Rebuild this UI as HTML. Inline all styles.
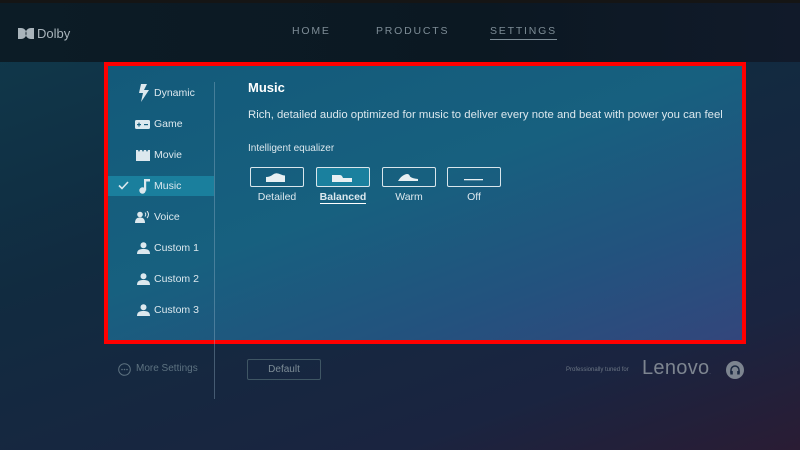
<!DOCTYPE html>
<html><head><meta charset="utf-8"><style>
*{margin:0;padding:0;box-sizing:border-box}
body{width:800px;height:450px;overflow:hidden;font-family:"Liberation Sans",sans-serif;position:relative;
background:linear-gradient(160deg,#0f3a4c 0%,#112b40 40%,#1a2440 80%,#2a1c34 100%);}
.top{position:absolute;left:0;top:0;width:800px;height:62px;background:linear-gradient(90deg,#0c1c26,#0b1822 60%,#111a2a);border-top:3px solid #151515}
.nav{position:absolute;top:25px;font-size:10.5px;letter-spacing:1.8px;color:#7d8c96}
.logo{position:absolute;left:18px;top:26px;color:#a9b4bb;font-size:13px;display:flex;align-items:center;gap:3px}
.panel{position:absolute;left:104px;top:62px;width:642px;height:282px;border:4px solid #ff0000;
background:linear-gradient(160deg,#135a7a 0%,#17607f 45%,#23527e 75%,#33467c 100%)}
.div{position:absolute;left:214px;top:82px;width:1px;height:317px;background:rgba(160,190,210,.35)}
.item{position:absolute;left:154px;font-size:10.5px;color:#dce8ee}
.sel{position:absolute;left:108px;top:176px;width:106px;height:20px;background:#1a7f9d}
.ic{position:absolute;fill:#dce8ee}
.eq{position:absolute;top:167px;width:54px;height:20px;border:1.5px solid #d9e6ec;border-radius:2px}
.eq svg{position:absolute;left:0;top:0}
.lbl{position:absolute;top:191px;font-size:10.5px;color:#dce8ee;width:54px;text-align:center}
</style></head><body>
<div class="top"></div>
<div class="logo"><svg width="16" height="11" viewBox="0 0 16 11"><path d="M0 0h3a5.5 5.5 0 0 1 0 11H0z M16 0h-3a5.5 5.5 0 0 0 0 11h3z" fill="#a9b4bb"/></svg><span>Dolby</span></div>
<div class="nav" style="left:292px">HOME</div>
<div class="nav" style="left:376px">PRODUCTS</div>
<div class="nav" style="left:490px;border-bottom:1px solid #7d8c96;padding-bottom:2px">SETTINGS</div>
<div class="panel"></div>
<div class="div"></div>
<div class="sel"></div>
<svg class="ic" style="left:138px;top:84px" width="12" height="18" viewBox="0 0 12 18"><path d="M3 0h6L6 6h5L3 18l2-9H1z"/></svg>
<div class="item" style="top:87px">Dynamic</div>
<svg class="ic" style="left:135px;top:120px" width="15" height="9" viewBox="0 0 15 9"><rect width="15" height="9" rx="1.5"/><rect x="2" y="4" width="4" height="1.2" fill="#16607f"/><rect x="3.4" y="2.6" width="1.2" height="4" fill="#16607f"/><rect x="9" y="4" width="4" height="1.2" fill="#16607f"/></svg>
<div class="item" style="top:118px">Game</div>
<svg class="ic" style="left:136px;top:150px" width="14" height="11" viewBox="0 0 14 11"><path d="M0 0h2l1 2 1-2h2l1 2 1-2h2l1 2 1-2h2v11H0z"/></svg>
<div class="item" style="top:149px">Movie</div>
<svg style="position:absolute;left:118px;top:181px" width="11" height="9" viewBox="0 0 11 9"><path d="M1 4.5l3 3 6-6.5" stroke="#dce8ee" stroke-width="1.6" fill="none"/></svg>
<svg class="ic" style="left:139px;top:178px" width="11" height="16" viewBox="0 0 11 16"><circle cx="3.5" cy="12.5" r="3.2"/><path d="M5 1h6v2.5H7.2V12.5H5z"/></svg>
<div class="item" style="top:180px">Music</div>
<svg class="ic" style="left:135px;top:211px" width="15" height="12" viewBox="0 0 15 12"><circle cx="5" cy="3.5" r="2.8"/><path d="M0 12c0-4 2-5.5 5-5.5s5 1.5 5 5.5z"/><path d="M10 1.5q1.5 2 0 4M12 0q3 3.5 0 7" stroke="#dce8ee" fill="none" stroke-width="1"/></svg>
<div class="item" style="top:211px">Voice</div>
<svg class="ic" style="left:137px;top:242px" width="13" height="12" viewBox="0 0 13 12"><circle cx="6.5" cy="3.2" r="3"/><path d="M0 12c0-4 2.5-5 6.5-5s6.5 1 6.5 5z"/></svg>
<div class="item" style="top:242px">Custom 1</div>
<svg class="ic" style="left:137px;top:273px" width="13" height="12" viewBox="0 0 13 12"><circle cx="6.5" cy="3.2" r="3"/><path d="M0 12c0-4 2.5-5 6.5-5s6.5 1 6.5 5z"/></svg>
<div class="item" style="top:273px">Custom 2</div>
<svg class="ic" style="left:137px;top:304px" width="13" height="12" viewBox="0 0 13 12"><circle cx="6.5" cy="3.2" r="3"/><path d="M0 12c0-4 2.5-5 6.5-5s6.5 1 6.5 5z"/></svg>
<div class="item" style="top:304px">Custom 3</div>

<div style="position:absolute;left:248px;top:80px;font-size:13px;font-weight:bold;color:#fff">Music</div>
<div style="position:absolute;left:248px;top:109px;font-size:11.35px;color:#dce8ee;white-space:nowrap">Rich, detailed audio optimized for music to deliver every note and beat with power you can feel</div>
<div style="position:absolute;left:248px;top:143px;font-size:10px;color:#dce8ee">Intelligent equalizer</div>

<div class="eq" style="left:250px"><svg width="51" height="17"><path d="M15 14V9q4 0 7-2.5t8 0q2 1 4 1V14z" fill="#e8f0f3"/></svg></div>
<div class="eq" style="left:316px;background:#1a809e"><svg width="51" height="17"><path d="M15 14V7h8q2 0 3 3h9v4z" fill="#e8f0f3"/></svg></div>
<div class="eq" style="left:382px"><svg width="51" height="17"><path d="M15 13q3-5 7-6.5t5 2q2 2 8 2.5v2z" fill="#e8f0f3"/></svg></div>
<div class="eq" style="left:447px"><svg width="51" height="17"><rect x="16" y="11" width="19" height="1.3" fill="#e8f0f3"/></svg></div>
<div class="lbl" style="left:250px">Detailed</div>
<div class="lbl" style="left:316px;font-weight:bold"><span style="border-bottom:1.5px solid #fff">Balanced</span></div>
<div class="lbl" style="left:382px">Warm</div>
<div class="lbl" style="left:447px">Off</div>

<svg style="position:absolute;left:118px;top:363px" width="13" height="13" viewBox="0 0 13 13"><circle cx="6.5" cy="6.5" r="5.8" fill="none" stroke="#5d7280" stroke-width="1"/><circle cx="4" cy="6.5" r=".8" fill="#5d7280"/><circle cx="6.5" cy="6.5" r=".8" fill="#5d7280"/><circle cx="9" cy="6.5" r=".8" fill="#5d7280"/></svg>
<div style="position:absolute;left:136px;top:363px;font-size:10px;color:#5d7280">More Settings</div>
<div style="position:absolute;left:247px;top:359px;width:74px;height:21px;border:1px solid #3f5664;border-radius:2px;font-size:10px;color:#7d8c96;text-align:center;line-height:19px">Default</div>
<div style="position:absolute;left:566px;top:367px;font-size:6px;color:#6c7684">Professionally tuned for</div>
<div style="position:absolute;left:642px;top:357px;font-size:20px;color:#7d8590;letter-spacing:.3px">Lenovo<span style="font-size:5px">.</span></div>
<svg style="position:absolute;left:726px;top:361px" width="18" height="18" viewBox="0 0 18 18"><circle cx="9" cy="9" r="9" fill="#7d8590"/><path d="M5 12V9a4 4 0 0 1 8 0v3" stroke="#1b2840" stroke-width="1.5" fill="none"/><rect x="4.3" y="10" width="2.5" height="3.5" fill="#1b2840"/><rect x="11.2" y="10" width="2.5" height="3.5" fill="#1b2840"/></svg>
</body></html>
